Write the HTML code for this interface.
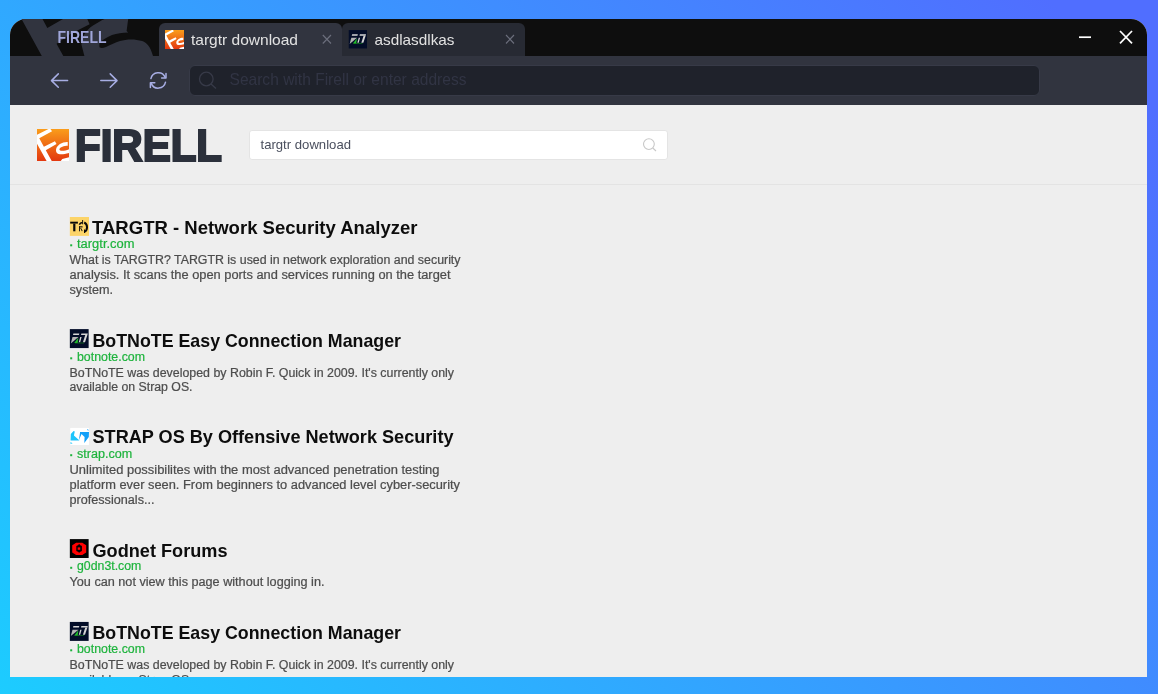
<!DOCTYPE html>
<html><head><meta charset="utf-8">
<style>
html,body{margin:0;padding:0;width:1158px;height:694px;overflow:hidden;}
body{background:linear-gradient(47deg,#1ccdff -1%,#506eff 94%);font-family:"Liberation Sans",sans-serif;position:relative;}
.win{position:absolute;left:10px;top:19px;width:1137px;height:658px;border-radius:16px 16px 0 0;overflow:hidden;background:#eeeeee;}
.title{position:absolute;left:0;top:0;width:1137px;height:37px;background:#0e0e0e;}
.tool{position:absolute;left:0;top:37px;width:1137px;height:49px;background:#31343f;}
.tab{position:absolute;top:4px;height:33px;border-radius:6px 6px 0 0;}
.t1{left:149px;width:183px;background:#31343f;}
.t2{left:332px;width:183px;background:#272a33;}
.addr{position:absolute;left:179px;top:46px;width:851px;height:31px;box-sizing:border-box;background:#1f222b;border:1px solid #373a47;border-radius:6px;}
.sinput{position:absolute;left:239px;top:111px;width:419px;height:30px;box-sizing:border-box;background:#fff;border:1px solid #e4e4e4;border-radius:3px;}
.sep{position:absolute;left:0;top:165px;width:1137px;height:1px;background:#e3e3e3;}
svg.ov{position:absolute;left:0;top:0;will-change:transform;}
</style></head>
<body>
<div class="win">
  <div class="title"></div>
  <div class="tab t1"></div>
  <div class="tab t2"></div>
  <div class="tool"></div>
  <div class="addr"></div>
  <div class="sinput"></div>
  <div class="sep"></div>
</div>
<svg class="ov" width="1158" height="694" viewBox="0 0 1158 694" font-family="Liberation Sans, sans-serif">
  <defs>
    <linearGradient id="og" x1="0" y1="0" x2="0" y2="1">
      <stop offset="0" stop-color="#fa9d1b"/><stop offset="1" stop-color="#e3380f"/>
    </linearGradient>
    <symbol id="fc" viewBox="0 0 100 100">
      <rect x="0" y="0" width="100" height="100" fill="url(#og)"/>
      <g fill="#ffffff">
        <polygon points="0,18 36,0 42,0 47,7 7,29 21.5,55.5 56,38 61,47 27.5,66.5 46,100 30,100 0,46"/>
        <path d="M96 41 C80 40 62 50 59.5 64 C58 78 70 84 100 75 L100 63 C85 70 70 70 70 63 C71 56 85 52 96 52 Z"/>
        <polygon points="74,100 79,94 100,88 100,100"/>
      </g>
    </symbol>
    <symbol id="ft" viewBox="0 0 19.2 19.2">
      <rect width="19.2" height="19.2" fill="#030d28"/>
      <g fill="#d6d6d6">
        <polygon points="3.8,4.3 9.7,4.3 9.3,5.9 3.4,5.9"/>
        <polygon points="11.8,4.3 18.2,4.3 17.8,5.9 11.4,5.9"/>
        <polygon points="10.6,8 12,8 10.6,13.1 9.2,13.1"/>
        <polygon points="15.7,5.9 17.8,5.9 15.4,13.1 13.3,13.1"/>
      </g>
      <polygon points="2.9,8 8.9,8 1.2,14.4" fill="#b4b4b4"/>
      <polygon points="8.7,8.6 8,13.9 4.6,14" fill="#22c02c"/>
      <rect x="5.5" y="13.6" width="9" height="0.6" fill="#18901f"/>
    </symbol>
    <symbol id="tg" viewBox="0 0 19.4 19">
      <rect width="19.4" height="19" fill="#fcd468"/>
      <g fill="#0a0a0a">
        <rect x="0.6" y="4.8" width="7.7" height="1.9"/>
        <rect x="3.6" y="6.7" width="2.2" height="7.7"/>
        <rect x="12.6" y="3.1" width="0.9" height="4.3"/>
        <rect x="9.5" y="9.4" width="3.5" height="1.1"/>
        <rect x="9.5" y="9.4" width="0.9" height="5"/>
        <polygon points="10.6,11.2 11.5,11 13,14.2 12.2,14.4"/>
        <rect x="14.4" y="12.6" width="1" height="3.5"/>
      </g>
      <path d="M14.6 5.6 A4.5 5 0 0 1 14.6 14.9" fill="none" stroke="#0a0a0a" stroke-width="2"/>
      <path d="M9.7 7.8 C10.5 6.3 11.6 5.8 13 5.6" fill="none" stroke="#0a0a0a" stroke-width="1.6"/>
    </symbol>
    <symbol id="st" viewBox="0 0 19 17.3">
      <rect x="0" y="0" width="19" height="17.3" rx="1" fill="#ffffff"/>
      <polygon points="0.4,12.8 0.7,6.2 3.5,3.2 4.7,3.8 3.8,7.6 8,11.4 9.4,12.8" fill="#1ec4fb"/>
      <polygon points="10,4.3 18.9,4.3 18.7,9.3 14.2,15.2 14.5,9.3 11.4,6.2 8.8,12.4" fill="#139ff8"/>
      <polygon points="16.7,1.2 18.3,1.8 18.3,3.4" fill="#2aa8fa"/>
      <polygon points="0.3,14.3 2.5,15.5 0.5,16.3" fill="#28c8fb"/>
    </symbol>
    <symbol id="gd" viewBox="0 0 19.2 19">
      <rect width="19.2" height="19" fill="#000"/>
      <polygon points="6.5,3.6 12.7,3.6 14.6,4.9 16.6,6.2 16.6,13.3 14.6,14.6 12.7,15.9 6.5,15.9 4.6,14.6 2.6,13.3 2.6,6.2 4.6,4.9" fill="#ff0000"/>
      <polygon points="8.9,5.2 10.3,5.2 10.3,5.9 12.3,6.8 12.3,12 10.3,12.9 10.3,13.5 8.9,13.5 8.9,12.9 6.7,12 6.7,6.8 8.9,5.9" fill="#000"/>
      <rect x="8.1" y="8.3" width="2.5" height="2.4" fill="#ff0000"/>
    </symbol>
    <clipPath id="winclip"><rect x="10" y="105" width="1137" height="572"/></clipPath>
  </defs>
  <!-- watermark -->
  <g fill="#31343f">
    <polygon points="21.5,19 42.5,19 47.3,28 63,19 87.3,19 89.6,24.2 70,34.3 56.5,43.8 63.3,56 41.8,56"/>
    <path d="M84.4 56 L81.5 45 C81 38 86 30 93 25.6 C97 23 101 20.5 104.6 19 L128.2 19 L126.6 31 L128.2 32.5 C122 32.8 117.3 33.3 112 35 C107 37 103 40 99.4 42.6 L99.4 47.3 C101 48.5 103.3 48.1 106 47 C111 44.8 115 42.6 120 41 C126 39.3 134.4 38.5 142.2 41.1 C147 43 150 46 153 56 Z"/>
  </g>
  <!-- favicons -->
  <use href="#fc" x="37" y="129" width="32" height="32"/>
  <use href="#fc" x="165" y="30" width="19" height="19"/>
  <use href="#ft" x="348.5" y="30" width="18.5" height="18.7"/>
  <use href="#tg" x="69.6" y="216.9" width="19.4" height="19"/>
  <use href="#ft" x="69.6" y="329.1" width="19.2" height="19.2"/>
  <use href="#st" x="70.1" y="427.8" width="19" height="17.3"/>
  <use href="#gd" x="69.6" y="539.1" width="19.2" height="19"/>
  <use href="#ft" x="69.6" y="621.7" width="19.2" height="19.2"/>
  <!-- titlebar text -->
  <text x="57.5" y="42.9" font-size="16.3" font-weight="bold" fill="#a0a6da" textLength="49" lengthAdjust="spacingAndGlyphs">FIRELL</text>
  <text x="191" y="44.8" font-size="15" fill="#e2e2e2" textLength="107" lengthAdjust="spacingAndGlyphs">targtr download</text>
  <text x="374.5" y="44.8" font-size="15" fill="#e2e2e2" textLength="80" lengthAdjust="spacingAndGlyphs">asdlasdlkas</text>
  <!-- window controls -->
  <g stroke="#ffffff" stroke-width="1.7" fill="none">
    <line x1="1079" y1="37.2" x2="1091" y2="37.2"/>
    <line x1="1120" y1="31" x2="1132" y2="43.4"/>
    <line x1="1132" y1="31" x2="1120" y2="43.4"/>
  </g>
  <!-- tab close -->
  <g stroke="#6c6f7d" stroke-width="1.1" fill="none">
    <line x1="322.8" y1="35" x2="331" y2="43.5"/>
    <line x1="331" y1="35" x2="322.8" y2="43.5"/>
    <line x1="506" y1="35" x2="514" y2="43.5"/>
    <line x1="514" y1="35" x2="506" y2="43.5"/>
  </g>
  <!-- toolbar icons -->
  <g stroke="#a8aee4" stroke-width="1.5" fill="none" stroke-linecap="round" stroke-linejoin="round">
    <path d="M51.5 80.6 H67.6 M58.3 73.9 L51.5 80.6 L58.3 87.3"/>
    <path d="M100.8 80.6 H117 M110.2 73.9 L117 80.6 L110.2 87.3"/>
    <path d="M150.9 78.6 A7.5 7.5 0 0 1 165.2 77.4 M165.5 82.2 A7.5 7.5 0 0 1 151.2 83.4"/>
    <path d="M161.6 78 L166 78 L166 73.4 M154.8 82.8 L150.4 82.8 L150.4 87.4"/>
  </g>
  <text x="229.5" y="85.2" font-size="16.2" fill="#313444" textLength="237" lengthAdjust="spacingAndGlyphs">Search with Firell or enter address</text>
  <g stroke="#373a48" stroke-width="1.3" fill="none">
    <circle cx="206.3" cy="79" r="6.8"/>
    <line x1="211" y1="84" x2="216" y2="88.6"/>
  </g>
  <!-- content -->
  <text x="75" y="160.7" font-size="43.6" font-weight="bold" fill="#2b303b" stroke="#2b303b" stroke-width="2.2" stroke-linejoin="miter" textLength="147" lengthAdjust="spacingAndGlyphs">FIRELL</text>
  <text x="260.5" y="149.3" font-size="13" fill="#4a4f5e" textLength="90.5" lengthAdjust="spacingAndGlyphs">targtr download</text>
  <g stroke="#c8c8c8" stroke-width="1.1" fill="none">
    <circle cx="648.9" cy="144.1" r="5.4"/>
    <line x1="652.8" y1="148" x2="656" y2="151"/>
  </g>

  <g font-size="19" font-weight="bold" fill="#0d0d0d">
    <text x="92" y="234.3" textLength="325.5" lengthAdjust="spacingAndGlyphs">TARGTR - Network Security Analyzer</text>
    <text x="92.5" y="347" textLength="308.5" lengthAdjust="spacingAndGlyphs">BoTNoTE Easy Connection Manager</text>
    <text x="92.5" y="443.4" textLength="361" lengthAdjust="spacingAndGlyphs">STRAP OS By Offensive Network Security</text>
    <text x="92.5" y="556.7" textLength="135" lengthAdjust="spacingAndGlyphs">Godnet Forums</text>
    <text x="92.5" y="639" textLength="308.5" lengthAdjust="spacingAndGlyphs">BoTNoTE Easy Connection Manager</text>
  </g>
  <g font-size="12" fill="#1db33c" stroke="#1db33c" stroke-width="0.2">
    <text x="77" y="247.8" textLength="57.5" lengthAdjust="spacingAndGlyphs">targtr.com</text>
    <text x="77" y="360.8" textLength="68" lengthAdjust="spacingAndGlyphs">botnote.com</text>
    <text x="77" y="457.7" textLength="55.3" lengthAdjust="spacingAndGlyphs">strap.com</text>
    <text x="77" y="570.3" textLength="64.4" lengthAdjust="spacingAndGlyphs">g0dn3t.com</text>
    <text x="77" y="652.8" textLength="68" lengthAdjust="spacingAndGlyphs">botnote.com</text>
  </g>
  <g fill="#1db33c">
    <rect x="70.2" y="244.3" width="2" height="2"/>
    <rect x="70.2" y="357.3" width="2" height="2"/>
    <rect x="70.2" y="454.2" width="2" height="2"/>
    <rect x="70.2" y="566.8" width="2" height="2"/>
    <rect x="70.2" y="649.3" width="2" height="2"/>
  </g>
  <g font-size="12" fill="#4d4d4d" stroke="#4d4d4d" stroke-width="0.22">
    <text x="69.5" y="263.7" textLength="391" lengthAdjust="spacingAndGlyphs">What is TARGTR? TARGTR is used in network exploration and security</text>
    <text x="69.5" y="278.7" textLength="381" lengthAdjust="spacingAndGlyphs">analysis. It scans the open ports and services running on the target</text>
    <text x="69.5" y="293.6" textLength="43.5" lengthAdjust="spacingAndGlyphs">system.</text>
    <text x="69.5" y="376.5" textLength="384.5" lengthAdjust="spacingAndGlyphs">BoTNoTE was developed by Robin F. Quick in 2009. It's currently only</text>
    <text x="69.5" y="391.3" textLength="123" lengthAdjust="spacingAndGlyphs">available on Strap OS.</text>
    <text x="69.5" y="473.9" textLength="370" lengthAdjust="spacingAndGlyphs">Unlimited possibilites with the most advanced penetration testing</text>
    <text x="69.5" y="488.8" textLength="390.5" lengthAdjust="spacingAndGlyphs">platform ever seen. From beginners to advanced level cyber-security</text>
    <text x="69.5" y="503.7" textLength="85" lengthAdjust="spacingAndGlyphs">professionals...</text>
    <text x="69.5" y="586.1" textLength="255" lengthAdjust="spacingAndGlyphs">You can not view this page without logging in.</text>
    <text x="69.5" y="668.9" textLength="384.5" lengthAdjust="spacingAndGlyphs">BoTNoTE was developed by Robin F. Quick in 2009. It's currently only</text>
    <text x="69.5" y="683.8" textLength="123" lengthAdjust="spacingAndGlyphs" clip-path="url(#winclip)">available on Strap OS.</text>
  </g>
</svg>
</body></html>
